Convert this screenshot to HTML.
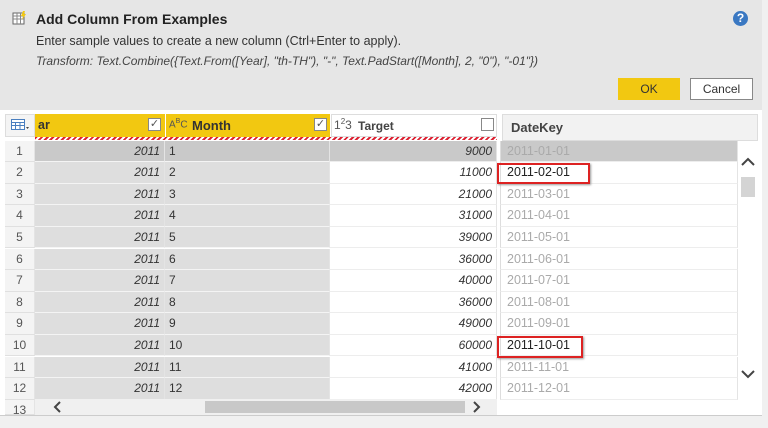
<!DOCTYPE html>
<html><head><style>
*{box-sizing:border-box;margin:0;padding:0}
body{width:768px;height:428px;overflow:hidden;background:#e6e6e6;font-family:"Liberation Sans",sans-serif;position:relative}
.a{position:absolute}
.row{position:absolute;left:5px;height:21.6px;width:733px;font-size:12px}
.c{position:absolute;top:0;height:100%;line-height:21px;border-bottom:1px solid #ededed;border-right:1px solid #e4e4e4}
.n{left:0;width:30px;background:#f4f4f4;text-align:center;color:#555;border-bottom:1px solid #e0e0e0}
.y{left:30px;width:130px;background:#dedede;text-align:right;padding-right:4px;font-style:italic;color:#333;border-bottom:1px solid #f4f4f4}
.m{left:160px;width:165px;background:#dedede;padding-left:4px;color:#333;border-bottom:1px solid #f4f4f4}
.t{left:325px;width:167px;background:#fff;text-align:right;padding-right:4px;font-style:italic;color:#333}
.d{left:495px;width:238px;background:#fff;padding-left:6px;color:#aaa;font-size:12.5px;border-left:1px solid #ddd}
.r1 .c{background:#c9c9c9}
.r1 .n{background:#f4f4f4}
</style></head><body>
<div class="a" style="left:762px;top:0;width:6px;height:428px;background:#f0f0f0"></div>
<svg class="a" style="left:12px;top:10px" width="16" height="16" viewBox="0 0 16 16"><rect x="1" y="3" width="11" height="11" fill="#fff" stroke="#666"/><path d="M1 6h11M1 9h11M5 3v11M8.5 3v11" stroke="#888" fill="none"/><path d="M11 1l-2 5h2l-1 4 4-6h-2l1-3z" fill="#f2c811"/></svg>
<div class="a" style="left:36px;top:11px;font-size:14px;font-weight:bold;color:#222">Add Column From Examples</div>
<div class="a" style="left:36px;top:34px;font-size:12.5px;color:#333">Enter sample values to create a new column (Ctrl+Enter to apply).</div>
<div class="a" style="left:36px;top:54px;font-size:12px;font-style:italic;color:#444">Transform: Text.Combine({Text.From([Year], "th-TH"), "-", Text.PadStart([Month], 2, "0"), "-01"})</div>
<div class="a" style="left:733px;top:11px;width:15px;height:15px;border-radius:50%;background:#3a78c2;color:#fff;font-size:12px;font-weight:bold;text-align:center;line-height:15px">?</div>
<div class="a" style="left:618px;top:78px;width:62px;height:22px;background:#f2c811;font-size:12px;text-align:center;line-height:22px;color:#333">OK</div>
<div class="a" style="left:690px;top:78px;width:63px;height:22px;background:#fff;border:1px solid #888;font-size:12px;text-align:center;line-height:20px;color:#333">Cancel</div>
<div class="a" style="left:0;top:110px;width:762px;height:305px;background:#fff"></div>
<div class="a" style="left:5px;top:114px;width:30px;height:23px;background:#f4f4f4;border:1px solid #ddd"></div>
<svg class="a" style="left:11px;top:119px" width="18" height="12"><rect x="0.5" y="0.5" width="13" height="10" fill="#fff" stroke="#4a7fc0"/><path d="M0 3.5h14M0 6.5h14M4.5 3v8M9 3v8" stroke="#4a7fc0"/><path d="M15 8h3l-1.5 2z" fill="#444"/></svg>
<div class="a" style="left:35px;top:114px;width:130px;height:23px;background:#f2c811;font-size:12.5px;font-weight:bold;line-height:23px;color:#333;padding-left:3px">ar</div>
<div class="a" style="left:148px;top:118px;width:13px;height:13px;background:#fff;border:1px solid #888;font-size:11px;line-height:11px;text-align:center;color:#555">✓</div>
<div class="a" style="left:166px;top:114px;width:164px;height:23px;background:#f2c811;font-size:13px;font-weight:bold;line-height:23px;color:#333;padding-left:26px">Month</div>
<div class="a" style="left:169px;top:118px;font-size:10px;color:#555">A<sup style="font-size:7px">B</sup>C</div>
<div class="a" style="left:314px;top:118px;width:13px;height:13px;background:#fff;border:1px solid #888;font-size:11px;line-height:11px;text-align:center;color:#555">✓</div>
<div class="a" style="left:331px;top:114px;width:166px;height:23px;background:#fff;border:1px solid #ddd;font-size:12px;font-weight:bold;line-height:22px;color:#444;padding-left:26px">Target</div>
<div class="a" style="left:334px;top:117px;font-size:12px;color:#555">1<sup style="font-size:8px">2</sup>3</div>
<div class="a" style="left:481px;top:118px;width:13px;height:13px;background:#fff;border:1px solid #888"></div>
<div class="a" style="left:35px;top:137px;width:462px;height:3px;background:repeating-linear-gradient(135deg,#d23 0 2px,#fff 2px 4px)"></div>
<div class="a" style="left:502px;top:114px;width:256px;height:27px;background:#f2f2f2;border:1px solid #ddd;font-size:13px;font-weight:bold;line-height:25px;color:#444;padding-left:8px">DateKey</div>
<div class="row r1" style="top:140.5px"><div class="c n">1</div><div class="c y">2011</div><div class="c m">1</div><div class="c t">9000</div><div class="c d">2011-01-01</div></div>
<div class="row" style="top:162.1px"><div class="c n">2</div><div class="c y">2011</div><div class="c m">2</div><div class="c t">11000</div><div class="c d" style="color:#222">2011-02-01</div></div>
<div class="row" style="top:183.7px"><div class="c n">3</div><div class="c y">2011</div><div class="c m">3</div><div class="c t">21000</div><div class="c d">2011-03-01</div></div>
<div class="row" style="top:205.3px"><div class="c n">4</div><div class="c y">2011</div><div class="c m">4</div><div class="c t">31000</div><div class="c d">2011-04-01</div></div>
<div class="row" style="top:226.9px"><div class="c n">5</div><div class="c y">2011</div><div class="c m">5</div><div class="c t">39000</div><div class="c d">2011-05-01</div></div>
<div class="row" style="top:248.5px"><div class="c n">6</div><div class="c y">2011</div><div class="c m">6</div><div class="c t">36000</div><div class="c d">2011-06-01</div></div>
<div class="row" style="top:270.1px"><div class="c n">7</div><div class="c y">2011</div><div class="c m">7</div><div class="c t">40000</div><div class="c d">2011-07-01</div></div>
<div class="row" style="top:291.7px"><div class="c n">8</div><div class="c y">2011</div><div class="c m">8</div><div class="c t">36000</div><div class="c d">2011-08-01</div></div>
<div class="row" style="top:313.3px"><div class="c n">9</div><div class="c y">2011</div><div class="c m">9</div><div class="c t">49000</div><div class="c d">2011-09-01</div></div>
<div class="row" style="top:334.9px"><div class="c n">10</div><div class="c y">2011</div><div class="c m">10</div><div class="c t">60000</div><div class="c d" style="color:#222">2011-10-01</div></div>
<div class="row" style="top:356.5px"><div class="c n">11</div><div class="c y">2011</div><div class="c m">11</div><div class="c t">41000</div><div class="c d">2011-11-01</div></div>
<div class="row" style="top:378.1px"><div class="c n">12</div><div class="c y">2011</div><div class="c m">12</div><div class="c t">42000</div><div class="c d">2011-12-01</div></div>
<div class="row" style="top:399.7px;height:15px;overflow:hidden"><div class="c n">13</div></div>
<div class="a" style="left:35px;top:399px;width:462px;height:16px;background:#f0f0f0"></div>
<div class="a" style="left:205px;top:401px;width:260px;height:12px;background:#c8c8c8"></div>
<svg class="a" style="left:53px;top:401px" width="10" height="12"><path d="M7 1L2 6l5 5" stroke="#444" stroke-width="2" fill="none"/></svg>
<svg class="a" style="left:471px;top:401px" width="10" height="12"><path d="M3 1l5 5-5 5" stroke="#444" stroke-width="2" fill="none"/></svg>
<div class="a" style="left:497px;top:163px;width:93px;height:21px;border:2px solid #d22;box-shadow:1px 1px 2px #999"></div>
<div class="a" style="left:497px;top:336px;width:86px;height:22px;border:2px solid #d22;box-shadow:1px 1px 2px #999"></div>
<div class="a" style="left:738px;top:141px;width:20px;height:274px;background:#fff"></div>
<svg class="a" style="left:741px;top:157px" width="14" height="10"><path d="M1 8l6-6 6 6" stroke="#444" stroke-width="2" fill="none"/></svg>
<div class="a" style="left:741px;top:177px;width:14px;height:20px;background:#d4d4d4"></div>
<svg class="a" style="left:741px;top:369px" width="14" height="10"><path d="M1 2l6 6 6-6" stroke="#444" stroke-width="2" fill="none"/></svg>
<div class="a" style="left:0;top:415px;width:762px;height:13px;background:#f0f0f0;border-top:1px solid #ccc"></div>
</body></html>
